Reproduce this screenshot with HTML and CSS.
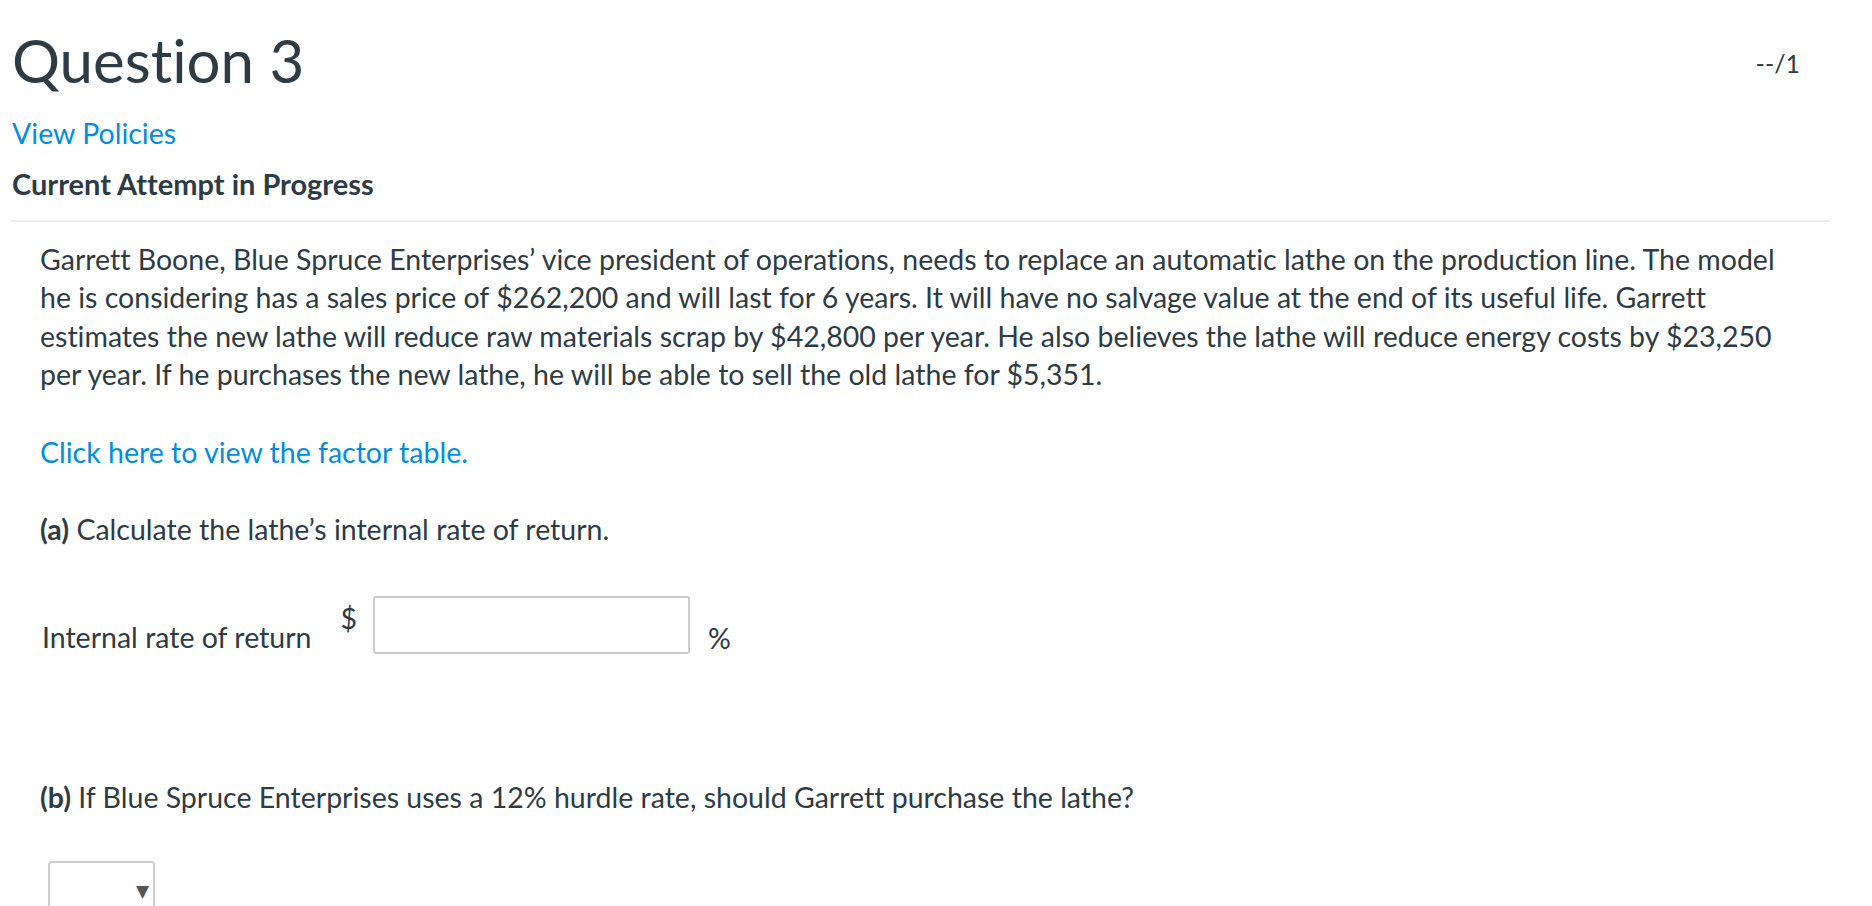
FILE: index.html
```
<!DOCTYPE html>
<html lang="en">
<head>
    <meta charset="UTF-8">
    <meta name="viewport" content="width=device-width, initial-scale=1.0">
    <title>Question 3</title>
    <link rel="stylesheet" href="styles.css">
</head>
<body>

<div class="quiz">
    <div class="question-header">
        <h1>Question 3</h1>
        <span class="points">--/1</span>
    </div>
    <a class="policies" href="#">View Policies</a>
    <h2 class="attempt">Current Attempt in Progress</h2>

    <div class="question-body">
        <p class="stem">Garrett Boone, Blue Spruce Enterprises’ vice president of operations, needs to replace an automatic lathe on the production line. The model he is considering has a sales price of $262,200 and will last for 6 years. It will have no salvage value at the end of its useful life. Garrett estimates the new lathe will reduce raw materials scrap by $42,800 per year. He also believes the lathe will reduce energy costs by $23,250 per year. If he purchases the new lathe, he will be able to sell the old lathe for $5,351.</p>

        <p class="factor"><a href="#">Click here to view the factor table.</a></p>

        <p class="part"><b>(a)</b> Calculate the lathe’s internal rate of return.</p>

        <div class="answer-row">
            <span class="answer-label">Internal rate of return</span>
            <span class="unit-before">$</span>
            <input type="text" class="answer-input">
            <span class="unit-after">%</span>
        </div>

        <p class="part part-b"><b>(b)</b> If Blue Spruce Enterprises uses a 12% hurdle rate, should Garrett purchase the lathe?</p>

        <div class="dropdown">
            <span class="arrow">▼</span>
        </div>
    </div>
</div>

</body>
</html>
```

FILE: styles.css
```
body {
    margin: 0;
    padding: 0;
    font-family: Lato, "Noto Sans", sans-serif;
    font-size: 28.5px;
    line-height: 38.4px;
    font-variant-ligatures: none;
    color: #2d3b45;
    background-color: #ffffff;
    overflow: hidden;
    height: 906px;
}
.quiz {
    margin-left: 11px;
    width: 1819px;
}
.question-header {
    display: flex;
    justify-content: space-between;
    align-items: flex-start;
    padding-top: 22px;
    padding-right: 30px;
}
h1 {
    margin: 0;
    font-size: 60px;
    line-height: 77px;
    font-weight: 400;
    padding-left: 1px;
}
.points {
    font-size: 25px;
    margin-top: 22px;
}
.policies {
    display: block;
    margin-top: 15px;
    color: #008ee2;
    text-decoration: none;
    padding-left: 1px;
}
.attempt {
    margin: 13px 0 0;
    font-size: 29px;
    line-height: 38.4px;
    font-weight: 700;
    padding-left: 1px;
    padding-bottom: 16px;
    border-bottom: 2px solid #ebeced;
}
.question-body {
    padding: 18px 32px 0 29px;
}
p {
    margin: 0;
}
.factor {
    margin-top: 40px;
}
.factor a {
    color: #008ee2;
    text-decoration: none;
}
.part {
    margin-top: 38px;
}
.answer-row {
    display: flex;
    align-items: flex-start;
    margin-top: 48px;
    padding-left: 2px;
}
.answer-label {
    margin-top: 22px;
}
.unit-before {
    margin-left: 29px;
    margin-top: 3px;
}
.answer-input {
    margin: 0 0 0 16px;
    width: 317px;
    height: 58px;
    box-sizing: border-box;
    border: 2px solid #cccccc;
    border-radius: 3px;
    font-family: inherit;
    font-size: 25.6px;
}
.unit-after {
    margin-left: 18px;
    margin-top: 23px;
}
.part-b {
    margin-top: 120px;
}
.dropdown {
    margin-top: 45px;
    margin-left: 8px;
    width: 107px;
    height: 60px;
    box-sizing: border-box;
    border: 2px solid #cccccc;
    border-radius: 4px;
    display: flex;
    justify-content: flex-end;
    align-items: flex-start;
}
.arrow {
    font-family: "DejaVu Sans", sans-serif;
    font-size: 17px;
    line-height: 17px;
    color: #555555;
    margin-top: 20px;
    margin-right: 4px;
}
```
